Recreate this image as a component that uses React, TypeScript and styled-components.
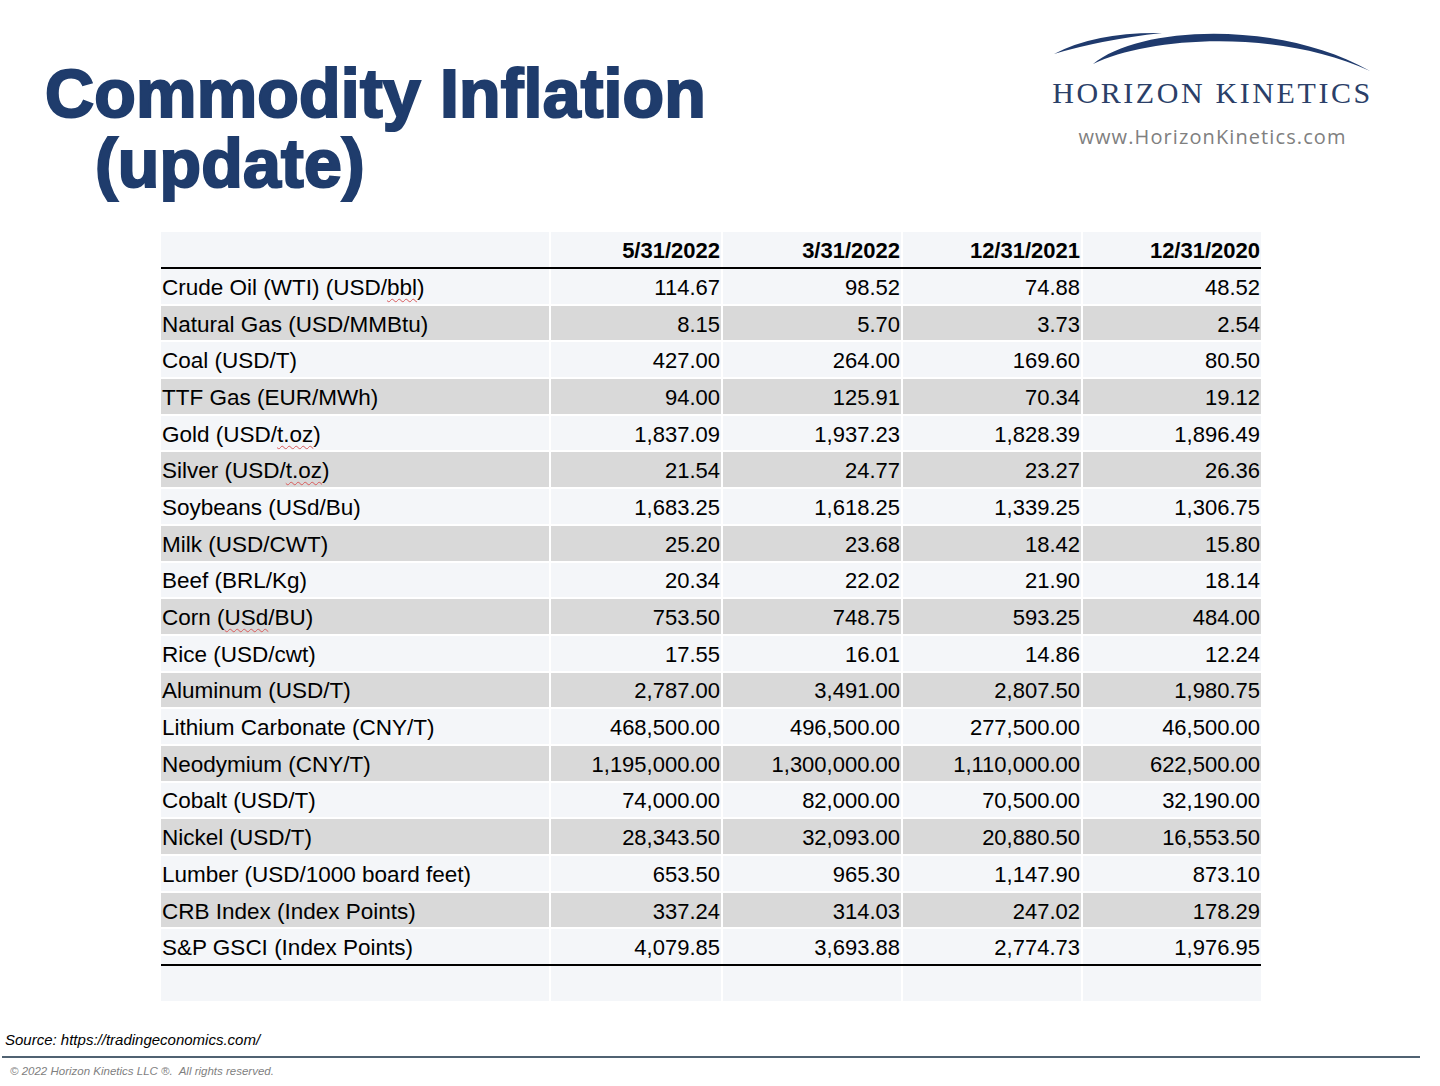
import React from "react";
import styled, { createGlobalStyle } from "styled-components";

const GlobalStyle = createGlobalStyle`
  html, body {
    margin: 0;
    padding: 0;
    background: #ffffff;
  }
`;

type Row = {
  label: string[];
  values: string[];
};

const DATES = ["5/31/2022", "3/31/2022", "12/31/2021", "12/31/2020"];

// label pieces: [before, squiggled, after]
const ROWS: Row[] = [
  { label: ["Crude Oil (WTI) (USD/", "bbl", ")"], values: ["114.67", "98.52", "74.88", "48.52"] },
  { label: ["Natural Gas (USD/MMBtu)"], values: ["8.15", "5.70", "3.73", "2.54"] },
  { label: ["Coal (USD/T)"], values: ["427.00", "264.00", "169.60", "80.50"] },
  { label: ["TTF Gas (EUR/MWh)"], values: ["94.00", "125.91", "70.34", "19.12"] },
  { label: ["Gold (USD/", "t.oz", ")"], values: ["1,837.09", "1,937.23", "1,828.39", "1,896.49"] },
  { label: ["Silver (USD/", "t.oz", ")"], values: ["21.54", "24.77", "23.27", "26.36"] },
  { label: ["Soybeans (USd/Bu)"], values: ["1,683.25", "1,618.25", "1,339.25", "1,306.75"] },
  { label: ["Milk (USD/CWT)"], values: ["25.20", "23.68", "18.42", "15.80"] },
  { label: ["Beef (BRL/Kg)"], values: ["20.34", "22.02", "21.90", "18.14"] },
  { label: ["Corn (", "USd", "/BU)"], values: ["753.50", "748.75", "593.25", "484.00"] },
  { label: ["Rice (USD/cwt)"], values: ["17.55", "16.01", "14.86", "12.24"] },
  { label: ["Aluminum (USD/T)"], values: ["2,787.00", "3,491.00", "2,807.50", "1,980.75"] },
  { label: ["Lithium Carbonate (CNY/T)"], values: ["468,500.00", "496,500.00", "277,500.00", "46,500.00"] },
  { label: ["Neodymium (CNY/T)"], values: ["1,195,000.00", "1,300,000.00", "1,110,000.00", "622,500.00"] },
  { label: ["Cobalt (USD/T)"], values: ["74,000.00", "82,000.00", "70,500.00", "32,190.00"] },
  { label: ["Nickel (USD/T)"], values: ["28,343.50", "32,093.00", "20,880.50", "16,553.50"] },
  { label: ["Lumber (USD/1000 board feet)"], values: ["653.50", "965.30", "1,147.90", "873.10"] },
  { label: ["CRB Index (Index Points)"], values: ["337.24", "314.03", "247.02", "178.29"] },
  { label: ["S&P GSCI (Index Points)"], values: ["4,079.85", "3,693.88", "2,774.73", "1,976.95"] },
];

const Page = styled.div`
  width: 1440px;
  height: 1086px;
  display: flex;
  flex-direction: column;
  font-family: "Liberation Sans", Arial, sans-serif;
  color: #000;
  overflow: hidden;
`;

const Header = styled.header`
  height: 232px;
  display: flex;
  justify-content: space-between;
  align-items: flex-start;
  padding: 0 65px 0 45px;
  box-sizing: border-box;
`;

const Title = styled.h1`
  margin: 58px 0 0 0;
  font-family: "Liberation Sans", Arial, sans-serif;
  font-weight: 700;
  font-size: 68px;
  line-height: 70px;
  color: #1f3c6c;
  -webkit-text-stroke: 2.2px #1f3c6c;
  letter-spacing: 0.2px;
`;

const TitleLine = styled.span<{ $indent?: number }>`
  display: block;
  padding-left: ${(p) => p.$indent ?? 0}px;
`;

const Logo = styled.div`
  margin-top: 28px;
  width: 325px;
  display: flex;
  flex-direction: column;
  align-items: center;
`;

const Brand = styled.div`
  margin-top: 5px;
  font-family: "Liberation Serif", "Times New Roman", serif;
  font-size: 30px;
  line-height: 30px;
  letter-spacing: 2.6px;
  color: #2b3f68;
  white-space: nowrap;
`;

const Url = styled.div`
  margin-top: 17px;
  font-family: "Open Sans", sans-serif;
  font-size: 20px;
  line-height: 24px;
  color: #808080;
  letter-spacing: 1.1px;
`;

const Table = styled.div`
  margin-left: 161px;
  width: 1100px;
  display: flex;
  flex-direction: column;
`;

const Grid = styled.div<{ $tone: "light" | "grey"; $rule?: boolean; $height: number; $gapTop?: boolean }>`
  display: grid;
  grid-template-columns: 388px 170px 178px 178px 178px;
  column-gap: 2px;
  height: ${(p) => p.$height}px;
  margin-top: ${(p) => (p.$gapTop ? 2 : 0)}px;
  border-bottom: ${(p) => (p.$rule ? "2.5px solid #000" : "none")};
  > div {
    background: ${(p) => (p.$tone === "grey" ? "#d9d9d9" : "#f4f6f9")};
  }
`;

const LabelCell = styled.div`
  display: flex;
  align-items: center;
  padding: 3px 0 0 1px;
  font-size: 22.5px;
  white-space: nowrap;
`;

const NumCell = styled.div<{ $bold?: boolean }>`
  display: flex;
  align-items: center;
  justify-content: flex-end;
  padding: 3px 1px 0 0;
  font-size: 22px;
  font-weight: ${(p) => (p.$bold ? 700 : 400)};
  white-space: nowrap;
`;

const Squiggle = styled.span`
  text-decoration: underline wavy #d85a5a;
  text-decoration-thickness: 1px;
  text-underline-offset: 3px;
`;

const Footer = styled.footer`
  margin-top: 30px;
  display: flex;
  flex-direction: column;
`;

const Source = styled.div`
  padding-left: 5px;
  font-size: 15px;
  line-height: 18px;
  font-style: italic;
  color: #000;
`;

const Rule = styled.div`
  margin: 7px 0 0 2px;
  width: 1418px;
  height: 1.5px;
  background: #506272;
`;

const Copyright = styled.div`
  margin-top: 6px;
  padding-left: 10px;
  font-size: 11.5px;
  line-height: 14px;
  font-style: italic;
  color: #7f7f7f;
`;

const Arcs = () => (
  <svg width="325" height="45" viewBox="0 0 325 45">
    <path d="M4 26 Q45 4 112 5 Q50 12 4 26 Z" fill="#1f3a6d" />
    <path d="M43 36 C90 -3 230 -8 320 43 C230 1 100 8 43 36 Z" fill="#1f3a6d" />
  </svg>
);

const Label = ({ parts }: { parts: string[] }) => (
  <LabelCell>
    {parts[0]}
    {parts[1] && <Squiggle>{parts[1]}</Squiggle>}
    {parts[2]}
  </LabelCell>
);

export default function App() {
  return (
    <>
      <GlobalStyle />
      <Page>
        <Header>
          <Title>
            <TitleLine>Commodity Inflation</TitleLine>
            <TitleLine $indent={50}>(update)</TitleLine>
          </Title>
          <Logo>
            <Arcs />
            <Brand>HORIZON KINETICS</Brand>
            <Url>www.HorizonKinetics.com</Url>
          </Logo>
        </Header>

        <Table>
          <Grid $tone="light" $height={35} $rule>
            <LabelCell />
            {DATES.map((d) => (
              <NumCell key={d} $bold>
                {d}
              </NumCell>
            ))}
          </Grid>
          {ROWS.map((row, i) => (
            <Grid
              key={i}
              $tone={i % 2 === 0 ? "light" : "grey"}
              $height={34.7}
              $gapTop={i > 0}
              $rule={i === ROWS.length - 1}
            >
              <Label parts={row.label} />
              {row.values.map((v, j) => (
                <NumCell key={j}>{v}</NumCell>
              ))}
            </Grid>
          ))}
          <Grid $tone="light" $height={35}>
            <div />
            <div />
            <div />
            <div />
            <div />
          </Grid>
        </Table>

        <Footer>
          <Source>Source: https://tradingeconomics.com/</Source>
          <Rule />
          <Copyright>© 2022 Horizon Kinetics LLC ®.&nbsp; All rights reserved.</Copyright>
        </Footer>
      </Page>
    </>
  );
}
